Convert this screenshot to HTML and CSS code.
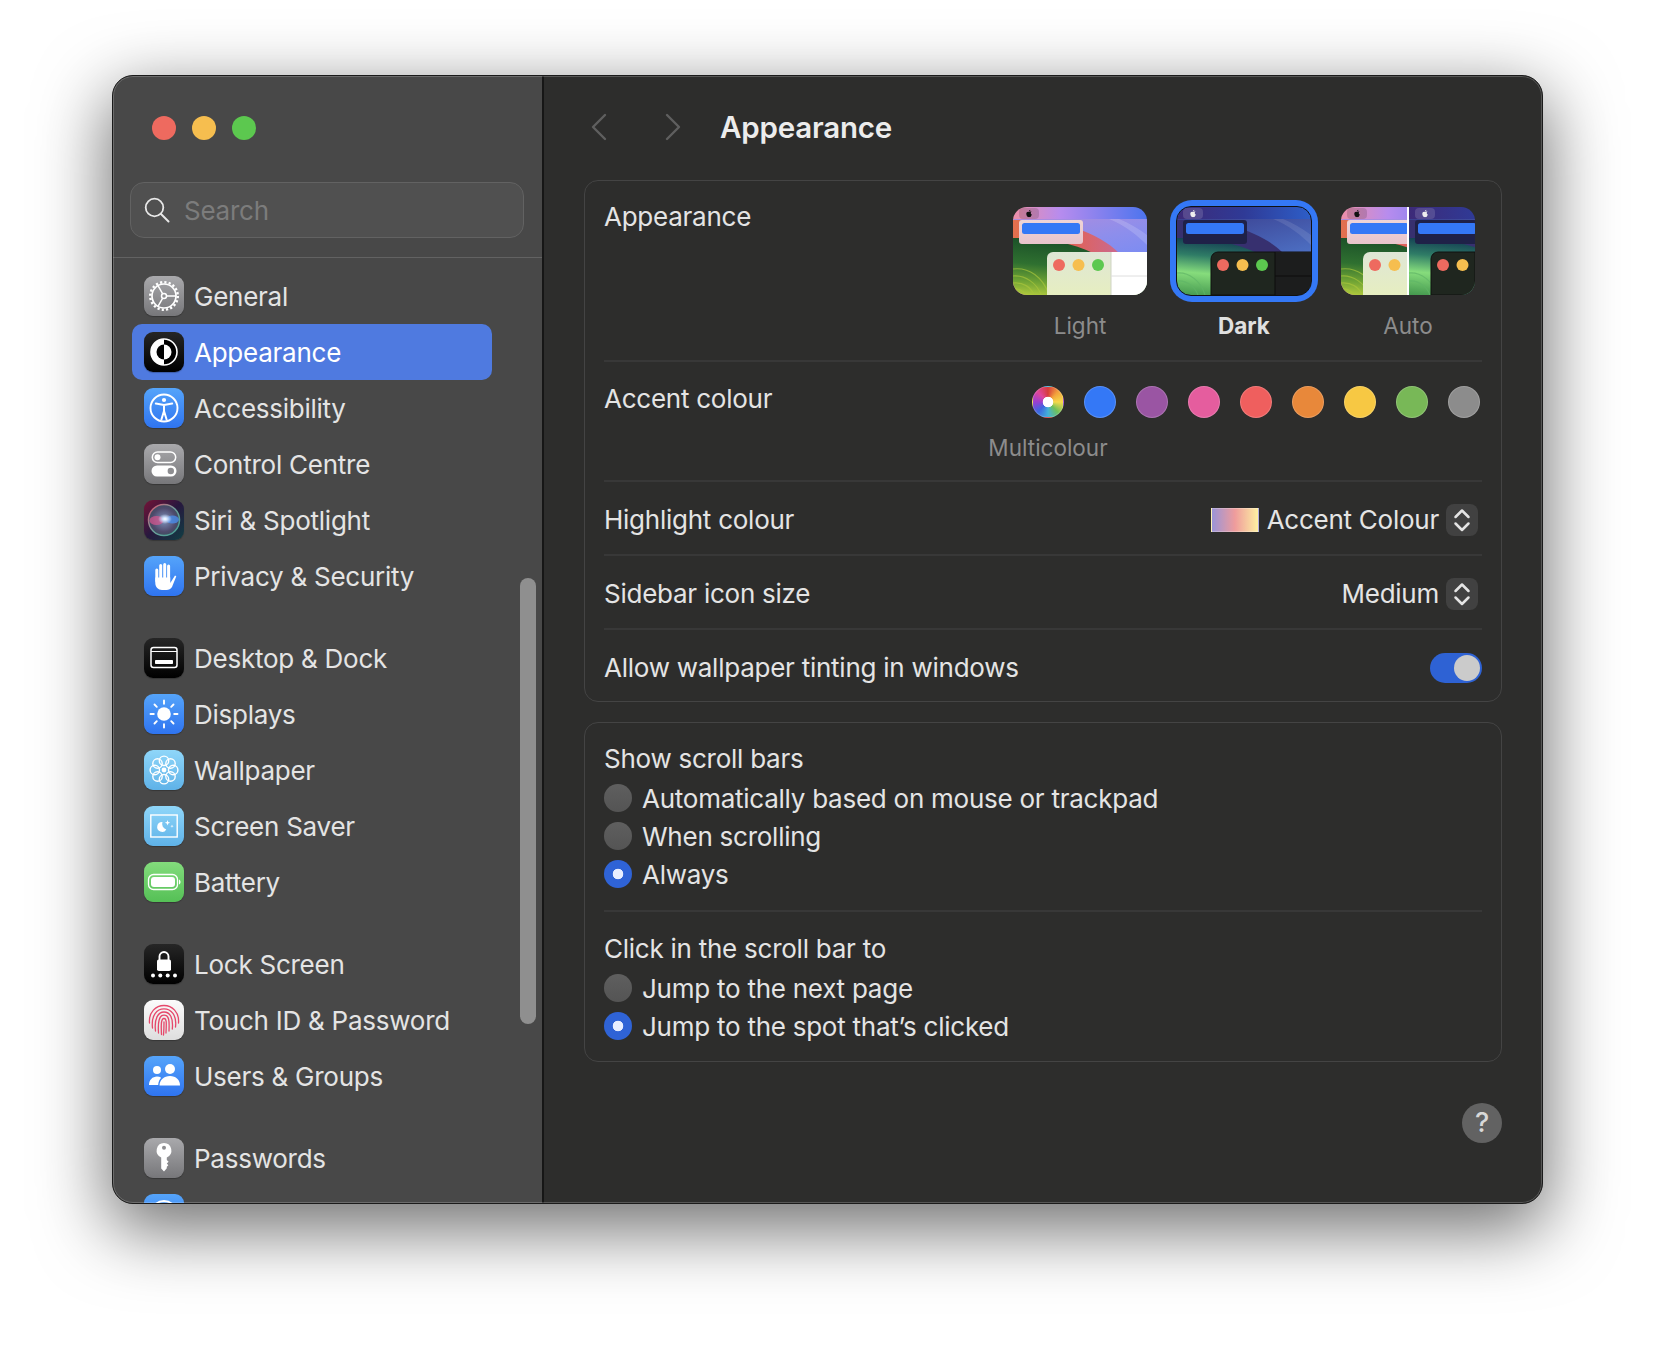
FILE: index.html
```html
<!DOCTYPE html>
<html lang="en">
<head>
    <meta charset="UTF-8">
    <title>Appearance</title>
    <link rel="stylesheet" href="styles.css">
</head>
<body>
    <svg class="defs" width="0" height="0">
        <defs>
            <linearGradient id="sky-light" x1="0" y1="0" x2="1" y2="0">
                <stop offset="0" stop-color="#ee8fa8"/><stop offset="0.35" stop-color="#b78cee"/><stop offset="1" stop-color="#4c74ee"/>
            </linearGradient>
            <linearGradient id="sky-dark" x1="0" y1="0" x2="1" y2="0">
                <stop offset="0" stop-color="#3d2a78"/><stop offset="0.5" stop-color="#2f3a96"/><stop offset="1" stop-color="#2d5ec8"/>
            </linearGradient>
            <linearGradient id="lobe-light" x1="0" y1="0" x2="1" y2="1">
                <stop offset="0" stop-color="#b08cdc"/><stop offset="0.6" stop-color="#8d8eec"/><stop offset="1" stop-color="#7c8cf2"/>
            </linearGradient>
            <linearGradient id="lobe-dark" x1="0" y1="0" x2="1" y2="1">
                <stop offset="0" stop-color="#3a3f8e"/><stop offset="1" stop-color="#4d70c4"/>
            </linearGradient>
            <linearGradient id="flame-light" x1="0" y1="0" x2="1" y2="0">
                <stop offset="0" stop-color="#e2704e"/><stop offset="0.6" stop-color="#df625c"/><stop offset="1" stop-color="#c96a90"/>
            </linearGradient>
            <linearGradient id="land-light" x1="0.2" y1="0" x2="0" y2="1">
                <stop offset="0" stop-color="#1a4f28"/><stop offset="0.45" stop-color="#2f7030"/><stop offset="0.75" stop-color="#6fa334"/><stop offset="1" stop-color="#b4cc3e"/>
            </linearGradient>
            <linearGradient id="land-dark" x1="0.2" y1="0" x2="0" y2="1">
                <stop offset="0" stop-color="#123b52"/><stop offset="0.3" stop-color="#2f7c66"/><stop offset="0.6" stop-color="#86dc7c"/><stop offset="1" stop-color="#44984e"/>
            </linearGradient>
            <linearGradient id="pane-light" x1="0" y1="0" x2="0" y2="1">
                <stop offset="0" stop-color="#dfe6d6"/><stop offset="1" stop-color="#e6eec0"/>
            </linearGradient>
            <linearGradient id="popup-light" x1="0" y1="0" x2="0" y2="1">
                <stop offset="0" stop-color="#efd4d6"/><stop offset="1" stop-color="#e8c4cc"/>
            </linearGradient>
            <symbol id="apple" viewBox="0 0 10 10">
                <path d="M5 3C3.6 2.2 1.6 3 1.6 5.4 1.6 7.4 3 9.6 4 9.6c.5 0 .6-.3 1-.3s.5.3 1 .3c1 0 2.4-2.2 2.4-3.4-1.6-.8-1.6-2.8-.2-3.4C7.200 2 6 2.500 5 3zM5 2.500C5 1.500 5.800.6 6.800.4 6.800 1.500 6 2.400 5 2.500z"/>
            </symbol>
            <symbol id="scene-light" viewBox="0 0 134 88">
                <rect width="134" height="88" fill="url(#sky-light)"/>
                <path d="M0 12H134V46H0Z" fill="url(#lobe-light)"/>
                <path d="M96 12C112 18 126 30 134 38V28C126 22 116 16 106 12Z" fill="#fff" opacity=".16"/>
                <path d="M0 13C44 12 84 24 106 46H0Z" fill="url(#flame-light)"/>
                <path d="M0 31C30 30 60 36 80 46H134V88H0Z" fill="url(#land-light)"/>
                <path d="M0 62C16 60 30 70 36 88M0 69C12 68 24 76 28 88M0 76C10 75 18 80 21 88M0 82C5 81 11 84 13 88" fill="none" stroke="#a8c43c" stroke-width="1.200" opacity=".7"/>
                <rect x="6" y="1" width="20" height="11" rx="4" fill="#000" opacity=".14"/>
                <use href="#apple" x="12" y="2.500" width="8" height="8" fill="#111"/>
                <rect x="6" y="13" width="64" height="24" rx="3" fill="url(#popup-light)"/>
                <rect x="9" y="16" width="58" height="11" rx="2.500" fill="#3478f6"/>
            </symbol>
            <symbol id="scene-dark" viewBox="0 0 134 88">
                <rect width="134" height="88" fill="url(#sky-dark)"/>
                <path d="M0 12H134V46H0Z" fill="url(#lobe-dark)"/>
                <path d="M96 12C112 18 126 30 134 38V28C126 22 116 16 106 12Z" fill="#fff" opacity=".1"/>
                <path d="M0 13C44 12 84 24 106 46H0Z" fill="#37306f"/>
                <path d="M0 31C30 30 60 36 80 46H134V88H0Z" fill="url(#land-dark)"/>
                <path d="M0 66C12 65 24 74 28 88M0 74C10 73 18 80 21 88" fill="none" stroke="#5fb566" stroke-width="1.200" opacity=".7"/>
                <rect x="6" y="1" width="20" height="11" rx="4" fill="#fff" opacity=".14"/>
                <use href="#apple" x="12" y="2.500" width="8" height="8" fill="#eee"/>
                <rect x="6" y="13" width="64" height="24" rx="3" fill="#1f2148"/>
                <rect x="9" y="16" width="58" height="11" rx="2.500" fill="#3478f6"/>
            </symbol>
        </defs>
    </svg>

    <div class="window">
        <aside class="sidebar">
            <div class="traffic-lights">
                <span class="light light-red"></span>
                <span class="light light-yellow"></span>
                <span class="light light-green"></span>
            </div>
            <div class="search">
                <svg class="search-icon" viewBox="0 0 26 26"><circle cx="10.500" cy="10.500" r="8.800" fill="none" stroke="#e8e8e8" stroke-width="1.800"/><path d="M17 17l7.500 7.500" stroke="#e8e8e8" stroke-width="2" stroke-linecap="round"/></svg>
                <span>Search</span>
            </div>
            <div class="sidebar-rule"></div>

            <nav class="nav">
                <div class="nav-group">
                    <div class="nav-item">
                        <span class="app-icon icon-gray">
                            <svg viewBox="0 0 40 40" fill="none" stroke="#fff">
                                <circle cx="20" cy="20" r="12" stroke-width="1.700"/>
                                <circle cx="20" cy="20" r="13.800" stroke-width="2.400" stroke-dasharray="2.200 2.130"/>
                                <circle cx="20" cy="20" r="2.500" stroke-width="1.500"/>
                                <path d="M22.500 20H32M18.700 17.800 14 9.700M18.700 22.200 14 30.300" stroke-width="1.500"/>
                            </svg>
                        </span>
                        General
                    </div>
                    <div class="nav-item nav-item-active">
                        <span class="app-icon icon-black">
                            <svg viewBox="0 0 40 40">
                                <circle cx="20" cy="20" r="13" fill="#000" stroke="#fff" stroke-width="1.600"/>
                                <path d="M20 7A13 13 0 0 0 20 33Z" fill="#fff"/>
                                <path d="M20 12.500A7.500 7.500 0 0 0 20 27.500Z" fill="#000"/>
                                <path d="M20 12.500A7.500 7.500 0 0 1 20 27.500Z" fill="#fff"/>
                            </svg>
                        </span>
                        Appearance
                    </div>
                    <div class="nav-item">
                        <span class="app-icon icon-blue">
                            <svg viewBox="0 0 40 40" fill="none" stroke="#fff">
                                <circle cx="20" cy="20" r="13.500" stroke-width="1.900"/>
                                <circle cx="20" cy="12" r="2.100" fill="#fff" stroke="none"/>
                                <path d="M11.800 15.600 20 17l8.200-1.400M20 17v6.500M20 23l-2.600 8.500M20 23l2.600 8.500" stroke-width="2" stroke-linecap="round"/>
                            </svg>
                        </span>
                        Accessibility
                    </div>
                    <div class="nav-item">
                        <span class="app-icon icon-gray">
                            <svg viewBox="0 0 40 40">
                                <rect x="8.300" y="8" width="23.400" height="10.500" rx="5.250" fill="none" stroke="#fff" stroke-width="1.500"/>
                                <circle cx="13.500" cy="13.250" r="3" fill="#fff"/>
                                <rect x="7.500" y="21.500" width="25" height="11" rx="5.500" fill="#fff"/>
                                <circle cx="26.800" cy="27" r="3.200" fill="#8e8e91"/>
                            </svg>
                        </span>
                        Control Centre
                    </div>
                    <div class="nav-item">
                        <span class="app-icon icon-siri">
                            <svg viewBox="0 0 40 40">
                                <defs>
                                    <radialGradient id="siri-bg" cx=".5" cy=".5" r=".55">
                                        <stop offset="0" stop-color="#7f93bc"/><stop offset=".7" stop-color="#4e4a6c"/><stop offset="1" stop-color="#37505c"/>
                                    </radialGradient>
                                    <linearGradient id="siri-ring" x1="0" y1="0" x2="1" y2="1">
                                        <stop offset="0" stop-color="#e0506e"/><stop offset=".5" stop-color="#6fa09c"/><stop offset="1" stop-color="#3f9f92"/>
                                    </linearGradient>
                                    <radialGradient id="siri-glow">
                                        <stop offset="0" stop-color="#fff"/><stop offset=".3" stop-color="#d2e4ff"/><stop offset="1" stop-color="#d2e4ff" stop-opacity="0"/>
                                    </radialGradient>
                                </defs>
                                <circle cx="20" cy="20" r="15.500" fill="url(#siri-bg)" stroke="url(#siri-ring)" stroke-width="1.500"/>
                                <ellipse cx="12.500" cy="20.500" rx="7" ry="4.500" fill="#d9568e" opacity=".7"/>
                                <ellipse cx="28.500" cy="19.500" rx="6.500" ry="4" fill="#4a8ce8" opacity=".8"/>
                                <ellipse cx="21" cy="19" rx="7" ry="5" fill="url(#siri-glow)"/>
                            </svg>
                        </span>
                        Siri &amp; Spotlight
                    </div>
                    <div class="nav-item">
                        <span class="app-icon icon-blue">
                            <svg viewBox="0 0 40 40" fill="none" stroke="#fff" stroke-linecap="round">
                                <path d="M12.800 14v11M16.700 9.500V22M20.700 8.500V22M24.600 10v12" stroke-width="3"/>
                                <path d="M11.300 21.500h15v5.500L31 19.500l1.300.8L28 31c-1.200 2-3.200 3-5.500 3H18c-3.800 0-6.700-3-6.700-7Z" fill="#fff" stroke="none"/>
                            </svg>
                        </span>
                        Privacy &amp; Security
                    </div>
                </div>

                <div class="nav-group">
                    <div class="nav-item">
                        <span class="app-icon icon-black">
                            <svg viewBox="0 0 40 40" fill="none">
                                <rect x="7" y="9.500" width="26" height="20" rx="2.500" stroke="#fff" stroke-width="1.500"/>
                                <path d="M7 13.500H33" stroke="#fff" stroke-width="1"/>
                                <rect x="11" y="22" width="18" height="4" rx=".8" fill="#fff"/>
                            </svg>
                        </span>
                        Desktop &amp; Dock
                    </div>
                    <div class="nav-item">
                        <span class="app-icon icon-blue">
                            <svg viewBox="0 0 40 40" stroke="#fff" stroke-width="1.900" stroke-linecap="round">
                                <circle cx="20" cy="20" r="6.800" fill="#fff" stroke="none"/>
                                <path d="M20 6.500v3.300M20 30.200v3.300M6.500 20h3.300M30.200 20h3.300M10.500 10.500l2.300 2.300M27.200 27.200l2.300 2.300M10.500 29.500l2.300-2.300M27.200 12.800l2.300-2.300"/>
                            </svg>
                        </span>
                        Displays
                    </div>
                    <div class="nav-item">
                        <span class="app-icon icon-sky">
                            <svg viewBox="0 0 40 40" fill="none" stroke="#fff" stroke-width="1.400">
                                <circle cx="20" cy="10.800" r="4.700"/>
                                <circle cx="20" cy="29.200" r="4.700"/>
                                <circle cx="10.800" cy="20" r="4.700"/>
                                <circle cx="29.200" cy="20" r="4.700"/>
                                <circle cx="13.500" cy="13.500" r="4.700"/>
                                <circle cx="26.500" cy="13.500" r="4.700"/>
                                <circle cx="13.500" cy="26.500" r="4.700"/>
                                <circle cx="26.500" cy="26.500" r="4.700"/>
                                <circle cx="20" cy="20" r="2.400" fill="#fff" stroke="none"/>
                            </svg>
                        </span>
                        Wallpaper
                    </div>
                    <div class="nav-item">
                        <span class="app-icon icon-sky">
                            <svg viewBox="0 0 40 40">
                                <rect x="6.800" y="9" width="26.400" height="22" fill="none" stroke="#fff" stroke-width="1.400"/>
                                <path d="M18.500 16a4.900 4.900 0 1 0 3.800 7.400A5.500 5.500 0 0 1 18.500 16Z" fill="#fff"/>
                                <path d="M23.500 14l.7 2 2 .7-2 .7-.7 2-.7-2-2-.7 2-.7ZM28 18.500l.4 1.300 1.300.4-1.300.4-.4 1.300-.4-1.300-1.300-.4 1.300-.4Z" fill="#fff"/>
                            </svg>
                        </span>
                        Screen Saver
                    </div>
                    <div class="nav-item">
                        <span class="app-icon icon-green">
                            <svg viewBox="0 0 40 40">
                                <rect x="4.500" y="12.500" width="29" height="15" rx="5" fill="none" stroke="#fff" stroke-width="1.300"/>
                                <rect x="7" y="15" width="24" height="10" rx="3" fill="#fff"/>
                                <path d="M35 17.500c1 .4 1.500 1.300 1.500 2.500s-.5 2.100-1.500 2.500Z" fill="#fff"/>
                            </svg>
                        </span>
                        Battery
                    </div>
                </div>

                <div class="nav-group">
                    <div class="nav-item">
                        <span class="app-icon icon-black">
                            <svg viewBox="0 0 40 40">
                                <path d="M15.500 16v-3.500a4.500 4.500 0 0 1 9 0V16" fill="none" stroke="#fff" stroke-width="1.900"/>
                                <rect x="13" y="15.500" width="14" height="11.500" rx="1.800" fill="#fff"/>
                                <circle cx="9" cy="31.500" r="2" fill="#fff"/>
                                <circle cx="16.300" cy="31.500" r="2" fill="#fff"/>
                                <circle cx="23.700" cy="31.500" r="2" fill="#fff"/>
                                <circle cx="31" cy="31.500" r="2" fill="#fff"/>
                            </svg>
                        </span>
                        Lock Screen
                    </div>
                    <div class="nav-item">
                        <span class="app-icon icon-white">
                            <svg viewBox="0 0 40 40" fill="none" stroke="#e6476a" stroke-width="1.300" stroke-linecap="round">
                                <path d="M5.500 23C4.500 12 12 5.500 20 5.500S35.500 12 34.500 23"/>
                                <path d="M8.500 28C7 15 13 8.800 20 8.800S33 15 31.500 27"/>
                                <path d="M11.500 31C10 18 14.500 12 20 12s9.500 5 8.300 17"/>
                                <path d="M14.500 33C13.800 22 15 15.200 20 15.200S25.500 20 25 31"/>
                                <path d="M17.500 34.500C17 25 17 18.500 20 18.500S22.300 24 22 33"/>
                                <path d="M20 22c0 4 0 8-.5 13"/>
                            </svg>
                        </span>
                        Touch ID &amp; Password
                    </div>
                    <div class="nav-item">
                        <span class="app-icon icon-blue">
                            <svg viewBox="0 0 40 40" fill="#fff">
                                <circle cx="13" cy="14" r="4"/>
                                <circle cx="26" cy="13" r="5"/>
                                <path d="M5 29c0-5 3.500-8.500 8-8.500 1.600 0 3 .4 4.200 1.200-1.800 1.800-2.800 4-3 7.300Z"/>
                                <path d="M15.500 29.500c0-5.500 4.500-9.500 10.500-9.500s10 4 10 9.500Z"/>
                            </svg>
                        </span>
                        Users &amp; Groups
                    </div>
                </div>

                <div class="nav-group">
                    <div class="nav-item">
                        <span class="app-icon icon-gray">
                            <svg viewBox="0 0 40 40">
                                <path d="M20 5a7.500 7.500 0 0 1 2.800 14.400V22l1.800 1.800-1.800 1.800 1.500 1.600-1.500 1.600v1.400L20 33.500l-2.800-3V19.400A7.500 7.500 0 0 1 20 5Z" fill="#fff"/>
                                <circle cx="20" cy="9.800" r="2" fill="#8e8e91"/>
                            </svg>
                        </span>
                        Passwords
                    </div>
                    <div class="nav-item">
                        <span class="app-icon icon-blue">
                            <svg viewBox="0 0 40 40" fill="none" stroke="#fff" stroke-width="1.800"><circle cx="20" cy="20" r="13"/></svg>
                        </span>
                    </div>
                </div>
            </nav>
            <div class="sidebar-scroll"></div>
        </aside>

        <main class="content">
            <header class="toolbar">
                <svg class="chevron" viewBox="0 0 18 30"><path d="M15 3 3 15l12 12" fill="none" stroke="#5f5f5f" stroke-width="2.400" stroke-linecap="round" stroke-linejoin="round"/></svg>
                <svg class="chevron chevron-next" viewBox="0 0 18 30"><path d="M3 3l12 12L3 27" fill="none" stroke="#5f5f5f" stroke-width="2.400" stroke-linecap="round" stroke-linejoin="round"/></svg>
                <h1 class="title">Appearance</h1>
            </header>

            <section class="card">
                <div class="row row-modes">
                    <div class="label">Appearance</div>
                    <div class="modes">
                        <div class="mode">
                            <div class="mode-frame">
                                <svg class="mode-thumb" viewBox="0 0 134 88">
                                    <use href="#scene-light" width="134" height="88"/>
                                    <path d="M34 88V51a6 6 0 0 1 6-6h94v43Z" fill="url(#pane-light)"/>
                                    <rect x="98" y="45" width="36" height="43" fill="#fff"/>
                                    <path d="M98 45V88" stroke="#cfd4c4" stroke-width="1"/>
                                    <path d="M98 69H134" stroke="#dedede" stroke-width="1"/>
                                    <circle cx="46" cy="58" r="6" fill="#ee6a5f"/>
                                    <circle cx="65.500" cy="58" r="6" fill="#f6be4f"/>
                                    <circle cx="85" cy="58" r="6" fill="#5cc84f"/>
                                </svg>
                            </div>
                            <div class="mode-name">Light</div>
                        </div>
                        <div class="mode mode-active">
                            <div class="mode-frame">
                                <svg class="mode-thumb" viewBox="0 0 134 88">
                                    <use href="#scene-dark" width="134" height="88"/>
                                    <path d="M34 88V52a7 7 0 0 1 7-7h93v43Z" fill="#1f261f" stroke="#111" stroke-width="1"/>
                                    <rect x="98" y="45" width="36" height="43" fill="#1c1d1d"/>
                                    <path d="M98 45V88M98 69H134" stroke="#0c0c0c" stroke-width="1"/>
                                    <circle cx="46" cy="58" r="6" fill="#ee6a5f"/>
                                    <circle cx="65.500" cy="58" r="6" fill="#f6be4f"/>
                                    <circle cx="85" cy="58" r="6" fill="#5cc84f"/>
                                </svg>
                            </div>
                            <div class="mode-name">Dark</div>
                        </div>
                        <div class="mode">
                            <div class="mode-frame">
                                <svg class="mode-thumb" viewBox="0 0 134 88">
                                    <svg x="0" y="0" width="66" height="88" viewBox="0 0 66 88">
                                        <use href="#scene-light" width="134" height="88"/>
                                        <path d="M22 88V52a7 7 0 0 1 7-7h37v43Z" fill="url(#pane-light)"/>
                                        <circle cx="34" cy="58" r="6" fill="#ee6a5f"/>
                                        <circle cx="53.500" cy="58" r="6" fill="#f6be4f"/>
                                    </svg>
                                    <svg x="68" y="0" width="66" height="88" viewBox="0 0 66 88">
                                        <use href="#scene-dark" width="134" height="88"/>
                                        <path d="M22 88V52a7 7 0 0 1 7-7h37v43Z" fill="#1f261f" stroke="#111" stroke-width="1"/>
                                        <circle cx="34" cy="58" r="6" fill="#ee6a5f"/>
                                        <circle cx="53.500" cy="58" r="6" fill="#f6be4f"/>
                                    </svg>
                                    <rect x="66" width="2" height="88" fill="#fff"/>
                                </svg>
                            </div>
                            <div class="mode-name">Auto</div>
                        </div>
                    </div>
                </div>

                <div class="row row-accent">
                    <div class="label">Accent colour</div>
                    <div class="accent-picker">
                        <div class="accent-dots">
                            <span class="dot dot-multi"></span>
                            <span class="dot dot-blue"></span>
                            <span class="dot dot-purple"></span>
                            <span class="dot dot-pink"></span>
                            <span class="dot dot-red"></span>
                            <span class="dot dot-orange"></span>
                            <span class="dot dot-yellow"></span>
                            <span class="dot dot-green"></span>
                            <span class="dot dot-graphite"></span>
                        </div>
                        <div class="accent-caption">Multicolour</div>
                    </div>
                </div>

                <div class="row row-setting">
                    <div class="label">Highlight colour</div>
                    <div class="popup">
                        <span class="highlight-swatch"></span>
                        <span class="popup-value">Accent Colour</span>
                        <span class="stepper">
                            <svg viewBox="0 0 32 32" fill="none" stroke="#e4e4e4" stroke-width="2.500" stroke-linecap="round" stroke-linejoin="round"><path d="M9.500 13 16 6.500l6.500 6.500M9.500 19.500 16 26l6.500-6.500"/></svg>
                        </span>
                    </div>
                </div>

                <div class="row row-setting">
                    <div class="label">Sidebar icon size</div>
                    <div class="popup">
                        <span class="popup-value">Medium</span>
                        <span class="stepper">
                            <svg viewBox="0 0 32 32" fill="none" stroke="#e4e4e4" stroke-width="2.500" stroke-linecap="round" stroke-linejoin="round"><path d="M9.500 13 16 6.500l6.500 6.500M9.500 19.500 16 26l6.500-6.500"/></svg>
                        </span>
                    </div>
                </div>

                <div class="row row-setting row-last">
                    <div class="label">Allow wallpaper tinting in windows</div>
                    <span class="toggle"><span class="toggle-knob"></span></span>
                </div>
            </section>

            <section class="card card-scroll">
                <div class="radio-group">
                    <div class="label radio-title">Show scroll bars</div>
                    <div class="radio-row"><span class="radio"></span>Automatically based on mouse or trackpad</div>
                    <div class="radio-row"><span class="radio"></span>When scrolling</div>
                    <div class="radio-row"><span class="radio radio-on"></span>Always</div>
                </div>
                <div class="radio-group radio-group-last">
                    <div class="label radio-title">Click in the scroll bar to</div>
                    <div class="radio-row"><span class="radio"></span>Jump to the next page</div>
                    <div class="radio-row"><span class="radio radio-on"></span>Jump to the spot that’s clicked</div>
                </div>
            </section>

            <div class="help-row"><span class="help">?</span></div>
        </main>
    </div>
</body>
</html>
```

FILE: styles.css
```css
* {
    box-sizing: border-box;
}

body {
    margin: 0;
    padding: 75px 0 0 112px;
    height: 1352px;
    background-color: #ffffff;
    font-family: Inter, "Noto Sans", sans-serif;
    font-size: 26px;
    letter-spacing: -0.25px;
    color: #e4e4e4;
    overflow: hidden;
}

.defs {
    display: block;
}

.window {
    position: relative;
    display: flex;
    width: 1431px;
    height: 1129px;
    border: 1px solid #1b1b1b;
    border-radius: 21px;
    overflow: hidden;
    background-color: #2d2d2c;
    box-shadow: 0 22px 70px 4px rgba(0, 0, 0, 0.56);
}

/* light hairline just inside the dark window edge */
.window::after {
    content: "";
    position: absolute;
    inset: 0;
    border: 1px solid rgba(255, 255, 255, 0.2);
    border-radius: 20px;
    pointer-events: none;
}

/* sidebar */
.sidebar {
    position: relative;
    width: 431px;
    flex-shrink: 0;
    background-color: #484848;
    border-right: 2px solid #161616;
    padding-top: 40px;
}

.traffic-lights {
    display: flex;
    gap: 16px;
    margin-left: 39px;
}

.light {
    width: 24px;
    height: 24px;
    border-radius: 50%;
}

.light-red { background-color: #ee6a5f; }
.light-yellow { background-color: #f6be4f; }
.light-green { background-color: #5cc84f; }

.search {
    display: flex;
    align-items: center;
    gap: 14px;
    width: 394px;
    height: 56px;
    margin: 42px 0 0 17px;
    padding-left: 13px;
    border: 1px solid #626262;
    border-radius: 14px;
    background-color: #505050;
    color: #7c7c7c;
}

.search-icon {
    width: 26px;
    height: 26px;
}

.sidebar-rule {
    height: 1px;
    margin-top: 19px;
    background-color: #626262;
}

.nav {
    padding-top: 10px;
}

.nav-group {
    margin-bottom: 26px;
}

.nav-item {
    display: flex;
    align-items: center;
    gap: 10px;
    width: 360px;
    height: 56px;
    margin-left: 19px;
    padding-left: 12px;
    border-radius: 10px;
}

.nav-item-active {
    background-color: #4f7ae0;
    color: #ffffff;
}

.app-icon {
    width: 40px;
    height: 40px;
    flex-shrink: 0;
    border-radius: 9px;
    box-shadow: 0 1px 1px rgba(0, 0, 0, 0.25);
}

.app-icon svg {
    display: block;
    width: 40px;
    height: 40px;
}

.icon-gray { background: linear-gradient(#a9a9ac, #77777a); }
.icon-black { background: linear-gradient(#262626, #000000); }
.icon-blue { background: linear-gradient(#55a4fa, #2f74f0); }
.icon-sky { background: linear-gradient(#8fd6f9, #5fb2e8); }
.icon-green { background: linear-gradient(#83dc7c, #55c056); }
.icon-white { background: linear-gradient(#fbfbfb, #dedede); }
.icon-siri { background: linear-gradient(135deg, #741337, #27183e 50%, #0f3f44); }

.sidebar-scroll {
    position: absolute;
    top: 502px;
    right: 6px;
    width: 16px;
    height: 446px;
    border-radius: 8px;
    background-color: #8f8f8f;
}

/* main pane */
.content {
    flex: 1;
    padding: 0 40px;
}

.toolbar {
    display: flex;
    align-items: center;
    height: 104px;
    padding-bottom: 2px;
}

.chevron {
    width: 18px;
    height: 30px;
    margin-left: 6px;
}

.chevron-next {
    margin-left: 56px;
}

.title {
    margin: 0 0 0 38px;
    font-size: 29.5px;
    font-weight: 600;
    letter-spacing: -0.2px;
    color: #ececec;
}

.card {
    border: 1px solid #444444;
    border-radius: 14px;
}

.row {
    margin: 0 19px;
    border-bottom: 2px solid #383838;
}

.label {
    line-height: 34px;
}

.row-modes {
    display: flex;
    justify-content: space-between;
    padding: 19px 0 20px;
}

.modes {
    display: flex;
    gap: 16px;
}

.mode {
    display: flex;
    flex-direction: column;
    align-items: center;
    color: #8c8c8c;
}

.mode-frame {
    width: 148px;
    height: 102px;
    padding: 7px;
    border-radius: 22px;
}

.mode-thumb {
    display: block;
    width: 134px;
    height: 88px;
    border-radius: 14px;
}

.mode-active .mode-frame {
    background-color: #3478f6;
}

.mode-active .mode-thumb {
    outline: 1px solid #111111;
}

.mode-name {
    margin-top: 10px;
    font-size: 22.5px;
    letter-spacing: 0;
    line-height: 28px;
}

.mode-active .mode-name {
    font-weight: 700;
    color: #e0e0e0;
}

.row-accent {
    display: flex;
    justify-content: space-between;
    padding: 20px 0 18px;
}

.accent-picker {
    padding-right: 2px;
    padding-top: 4px;
}

.accent-dots {
    display: flex;
    gap: 20px;
}

.dot {
    width: 32px;
    height: 32px;
    border-radius: 50%;
    border: 1px solid rgba(255, 255, 255, 0.18);
}

.dot-multi {
    background: radial-gradient(circle, #ffffff 0 5px, transparent 5.6px),
        conic-gradient(#d63b3b, #f3a33c, #f5d94a, #6fc05a, #43b0d9, #3c68e0, #9a3fd0, #e0459a, #d63b3b);
}

.dot-blue { background-color: #3478f6; }
.dot-purple { background-color: #9a55a3; }
.dot-pink { background-color: #e55d9e; }
.dot-red { background-color: #ef5f5e; }
.dot-orange { background-color: #e8883a; }
.dot-yellow { background-color: #f7c843; }
.dot-green { background-color: #78b857; }
.dot-graphite { background-color: #8c8c8c; }

.accent-caption {
    width: 140px;
    margin: 16px 0 0 -54px;
    text-align: center;
    font-size: 22.5px;
    letter-spacing: 0;
    line-height: 28px;
    color: #8c8c8c;
}

.row-setting {
    display: flex;
    justify-content: space-between;
    align-items: center;
    height: 74px;
    padding-top: 3px;
}

.row-last {
    height: 71px;
    padding-top: 4px;
    border-bottom: none;
}

.popup {
    display: flex;
    align-items: center;
    margin-right: 4px;
}

.highlight-swatch {
    width: 48px;
    height: 24px;
    margin-right: 8px;
    border: 1px solid rgba(255, 255, 255, 0.25);
    background: linear-gradient(90deg, #9a94d8, #ef9c9c 50%, #fdf0a2);
}

.stepper {
    width: 32px;
    height: 32px;
    margin-left: 7px;
    border-radius: 8px;
    background-color: #414141;
}

.stepper svg {
    display: block;
    width: 32px;
    height: 32px;
}

.toggle {
    display: flex;
    justify-content: flex-end;
    align-items: center;
    width: 52px;
    height: 30px;
    padding-right: 2px;
    border-radius: 15px;
    background-color: #2e62d4;
}

.toggle-knob {
    width: 26px;
    height: 26px;
    border-radius: 50%;
    background-color: #cbcbcb;
}

.card-scroll {
    margin-top: 20px;
}

.radio-group {
    margin: 0 19px;
    padding: 19px 0 17px;
    border-bottom: 2px solid #383838;
}

.radio-group-last {
    padding: 20px 0 16px;
    border-bottom: none;
}

.radio-title {
    margin-bottom: 3px;
}

.radio-row {
    display: flex;
    align-items: center;
    gap: 10px;
    height: 38px;
}

.radio {
    width: 28px;
    height: 28px;
    border-radius: 50%;
    background: linear-gradient(#5f5f5f, #545454);
}

.radio-on {
    background: radial-gradient(circle, #e8eeff 0 5px, transparent 5.6px), #2f63d6;
}

.help-row {
    display: flex;
    justify-content: flex-end;
    margin-top: 41px;
}

.help {
    width: 40px;
    height: 40px;
    border-radius: 50%;
    background-color: #626262;
    color: #d8d8d8;
    font-size: 27px;
    font-weight: 500;
    line-height: 40px;
    text-align: center;
}
```
